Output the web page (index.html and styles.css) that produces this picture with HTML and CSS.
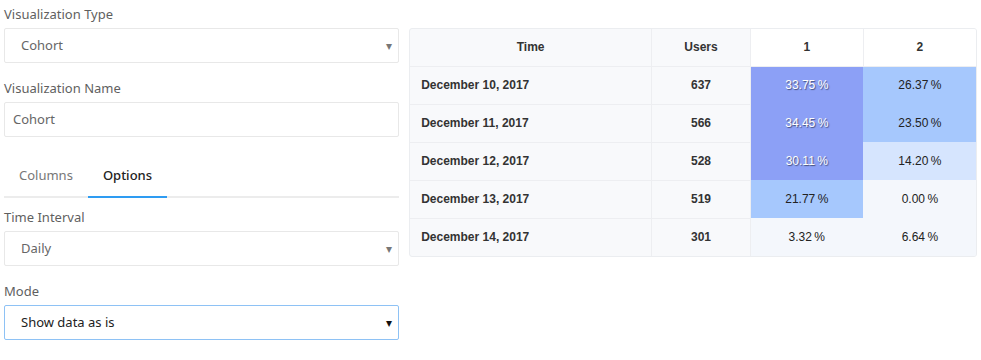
FILE: index.html
```html
<html>
  <head>
    <meta charset="utf-8" />
    <link rel="stylesheet" href="styles.css">
  </head>
  <body>
    <div class="page">
      <div class="editor">
        <div class="field">
          <label>Visualization Type</label>
          <div class="select">Cohort<span class="caret">&#9662;</span></div>
        </div>
        <div class="field">
          <label>Visualization Name</label>
          <div class="input">Cohort</div>
        </div>

        <div class="tabs">
          <div class="tab">Columns</div>
          <div class="tab active">Options</div>
        </div>

        <div class="field">
          <label>Time Interval</label>
          <div class="select">Daily<span class="caret">&#9662;</span></div>
        </div>
        <div class="field">
          <label>Mode</label>
          <div class="select focused">Show data as is<span class="caret">&#9662;</span></div>
        </div>
      </div>

      <div class="cohort">
        <table>
          <thead>
            <tr>
              <th class="time">Time</th>
              <th class="users">Users</th>
              <th class="step">1</th>
              <th class="step">2</th>
            </tr>
          </thead>
          <tbody>
            <tr>
              <td class="time">December 10, 2017</td>
              <td class="users">637</td>
              <td class="val dark">33.75&#8201;%</td>
              <td class="val mid">26.37&#8201;%</td>
            </tr>
            <tr>
              <td class="time">December 11, 2017</td>
              <td class="users">566</td>
              <td class="val dark">34.45&#8201;%</td>
              <td class="val mid">23.50&#8201;%</td>
            </tr>
            <tr>
              <td class="time">December 12, 2017</td>
              <td class="users">528</td>
              <td class="val dark">30.11&#8201;%</td>
              <td class="val light">14.20&#8201;%</td>
            </tr>
            <tr>
              <td class="time">December 13, 2017</td>
              <td class="users">519</td>
              <td class="val mid">21.77&#8201;%</td>
              <td class="val none">0.00&#8201;%</td>
            </tr>
            <tr>
              <td class="time">December 14, 2017</td>
              <td class="users">301</td>
              <td class="val none">3.32&#8201;%</td>
              <td class="val none">6.64&#8201;%</td>
            </tr>
          </tbody>
        </table>
      </div>
    </div>
  </body>
</html>
```

FILE: styles.css
```css
body {
  margin: 0;
  background: #fff;
}

.page {
  display: flex;
  align-items: flex-start;
  padding: 0 4px;
  gap: 10px;
}

.editor {
  width: 396px;
  font-family: "Noto Sans", "Open Sans", sans-serif;
  font-size: 13px;
  color: #666;
}

.field label {
  display: block;
  height: 28px;
  line-height: 29px;
  color: #5f5f5f;
}

.field + .field {
  margin-top: 11px;
}

.select,
.input {
  position: relative;
  box-sizing: border-box;
  height: 35px;
  line-height: 33px;
  border: 1px solid #e8e8e8;
  border-radius: 2px;
  padding-left: 16px;
  color: #666;
}

.input {
  padding-left: 8px;
}

.select .caret {
  position: absolute;
  right: 6px;
  top: 0;
  font-size: 12px;
  color: #777;
}

.select.focused {
  border-color: #8ec2f5;
  color: #222;
}

.select.focused .caret {
  color: #111;
}

.tabs {
  display: flex;
  margin-top: 20px;
  margin-bottom: 5px;
  border-bottom: 2px solid #ececec;
  height: 39px;
}

.tab {
  padding: 0 15px;
  line-height: 37px;
  color: #777;
  margin-bottom: -2px;
  border-bottom: 2px solid transparent;
}

.tab.active {
  color: #222;
  font-weight: 500;
  border-bottom-color: #2e9cf2;
}

.cohort {
  margin-top: 28px;
  border: 1px solid #ebedf0;
  border-radius: 3px;
  background: #f8f9fb;
  overflow: hidden;
}

table {
  border-collapse: collapse;
  font-family: "Liberation Sans", Arial, sans-serif;
  font-size: 12px;
  color: #333;
}

th,
td {
  height: 38px;
  padding: 0 11px;
  border: 1px solid #edeef1;
  box-sizing: border-box;
}

th {
  height: 37px;
}

tr:first-child th,
tr:first-child td {
  border-top: none;
}

th:first-child,
td:first-child {
  border-left: none;
}

th:last-child,
td:last-child {
  border-right: none;
}

tbody tr:last-child td {
  border-bottom: none;
}

th {
  font-weight: bold;
  text-align: center;
}

th.time,
td.time {
  width: 242px;
}

td.time {
  font-weight: bold;
  text-align: left;
}

th.users,
td.users {
  width: 99px;
  text-align: center;
  font-weight: bold;
}

th.step {
  width: 113px;
  background: #fff;
}

td.val {
  text-align: center;
  color: #222;
  border-top-color: transparent;
  border-bottom-color: transparent;
  border-right-color: transparent;
}

td.val.dark {
  background: #8ca0f6;
  color: #fff;
  text-shadow: 1px 1px 1px rgba(0, 0, 0, 0.5);
}

td.val.mid {
  background: #a6c8fd;
}

td.val.light {
  background: #d6e5fe;
}

td.val.none {
  background: #f4f7fc;
}
```
